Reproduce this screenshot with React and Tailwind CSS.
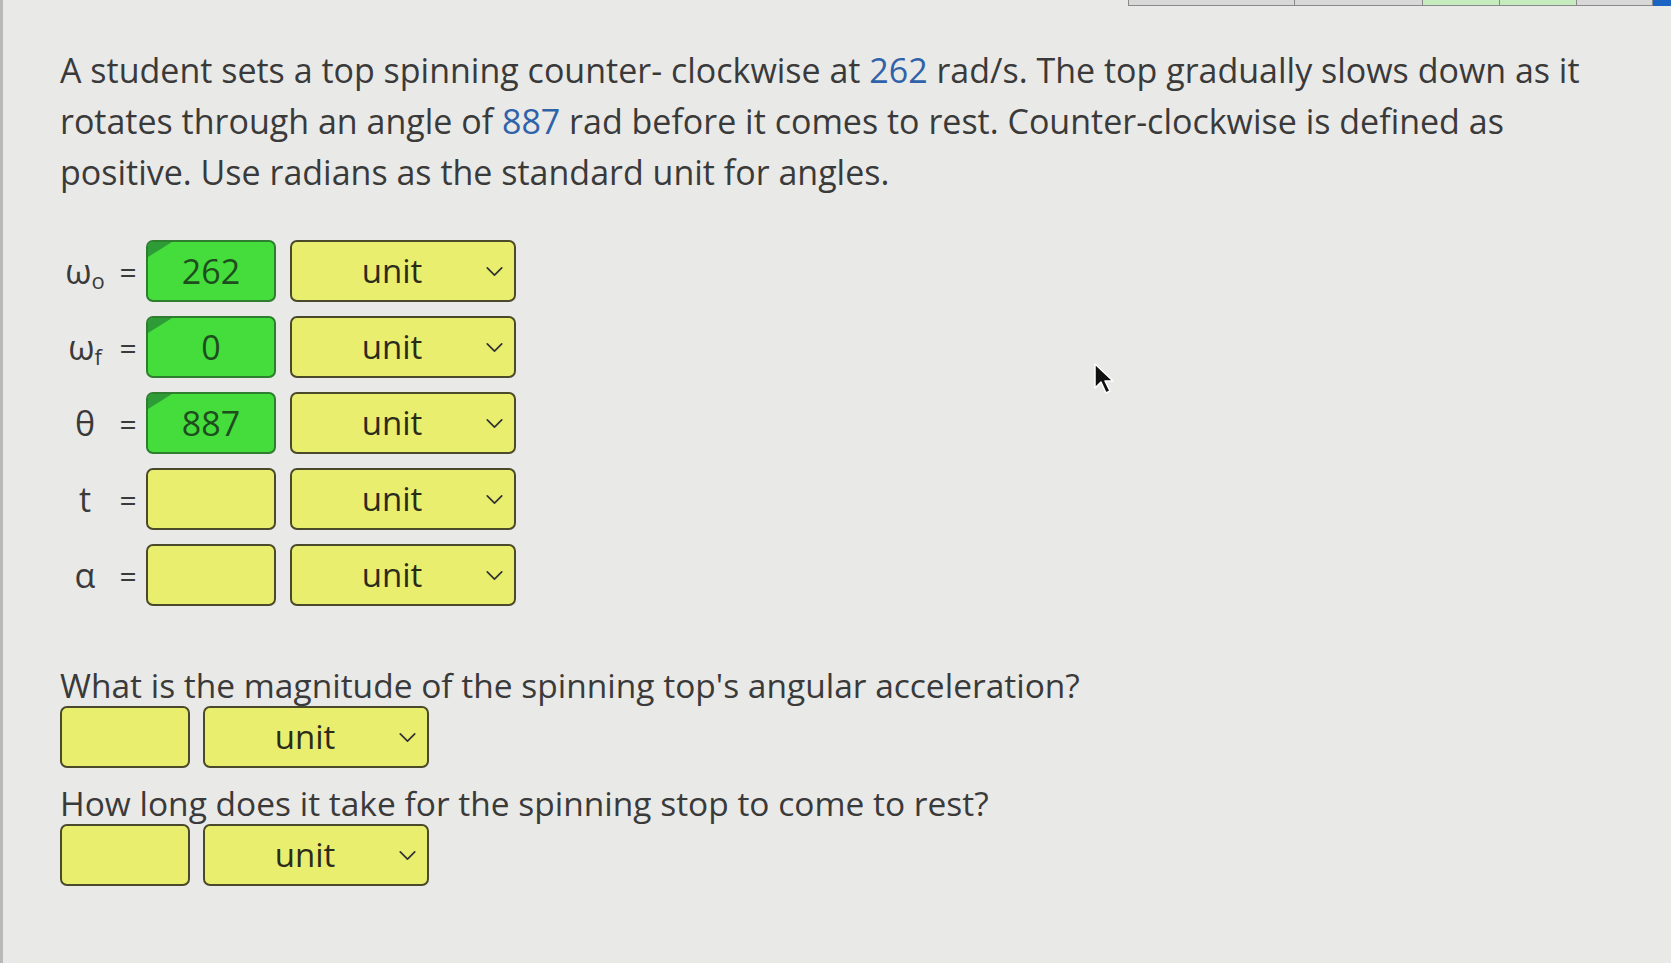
import { ChevronDown } from 'lucide-react'

const font = { fontFamily: '"Open Sans", "Noto Sans", sans-serif' }

const GreenBox = ({ value }) => (
  <div className="relative w-[130px] h-[62px] rounded-[7px] border-2 border-[#2f7d2f] bg-[#44dd3c] flex items-center justify-center text-[34px] text-[#1e4d1e] overflow-hidden">
    <div className="absolute top-0 left-0 w-[24px] h-[15px] bg-[#2e9c36] [clip-path:polygon(0_0,100%_0,0_100%)]" />
    {value}
  </div>
)

const YellowBox = ({ w = 'w-[130px]' }) => (
  <div className={`${w} h-[62px] rounded-[7px] border-2 border-[#4a4a2a] bg-[#eaee6e]`} />
)

const UnitSelect = ({ w = 'w-[226px]' }) => (
  <div className={`${w} h-[62px] rounded-[7px] border-2 border-[#4a4a2a] bg-[#eaee6e] flex items-center pl-3 pr-[5px]`}>
    <span className="flex-1 text-center text-[33px] text-[#2b2b1a]">unit</span>
    <ChevronDown size={29} strokeWidth={1.4} className="text-[#333]" />
  </div>
)

const Row = ({ label, children }) => (
  <div className="flex items-center h-[62px]">
    <div className="w-[50px] text-center text-[34px] text-[#3a3a3a]">{label}</div>
    <div className="w-[36px] text-[30px] text-[#3a3a3a] text-center">=</div>
    <div className="flex items-center gap-[14px]">{children}</div>
  </div>
)

export default function App() {
  return (
    <div className="relative w-[1671px] h-[963px] overflow-hidden bg-[#e9e9e8] border-l-[3px] border-[#b9b9b9]" style={font}>
      {/* top tabs */}
      <div className="absolute top-0 left-[1125px] right-0 h-[6px] flex">
        <div className="w-[167px] bg-[#d8d8d8] border border-t-0 border-[#8a8a8a]" />
        <div className="w-[128px] bg-[#d8d8d8] border border-t-0 border-l-0 border-[#8a8a8a]" />
        <div className="w-[77px] bg-[#c6ebbf] border border-t-0 border-l-0 border-[#8a8a8a]" />
        <div className="w-[77px] bg-[#c6ebbf] border border-t-0 border-l-0 border-[#8a8a8a]" />
        <div className="w-[76px] bg-[#d8d8d8] border border-t-0 border-l-0 border-[#8a8a8a]" />
        <div className="flex-1 bg-[#1b64c4]" />
      </div>

      <div className="pl-[57px] pt-[45px]">
        <p className="text-[34px] leading-[51px] text-[#3a3a3a] whitespace-nowrap">
          A student sets a top spinning counter- clockwise at <span className="text-[#2f62a8]">262</span> rad/s. The top gradually slows down as it
          <br />
          rotates through an angle of <span className="text-[#2f62a8]">887</span> rad before it comes to rest. Counter-clockwise is defined as
          <br />
          positive. Use radians as the standard unit for angles.
        </p>

        <div className="mt-[42px] flex flex-col gap-[14px]">
          <Row label={<span>ω<sub className="text-[22px]">o</sub></span>}>
            <GreenBox value="262" />
            <UnitSelect />
          </Row>
          <Row label={<span>ω<sub className="text-[22px]">f</sub></span>}>
            <GreenBox value="0" />
            <UnitSelect />
          </Row>
          <Row label="θ">
            <GreenBox value="887" />
            <UnitSelect />
          </Row>
          <Row label="t">
            <YellowBox />
            <UnitSelect />
          </Row>
          <Row label="α">
            <YellowBox />
            <UnitSelect />
          </Row>
        </div>

        <p className="mt-[56px] text-[33.5px] leading-[46px] text-[#3a3a3a] whitespace-nowrap">
          What is the magnitude of the spinning top's angular acceleration?
        </p>
        <div className="-mt-[2px] flex items-center gap-[13px]">
          <YellowBox />
          <UnitSelect />
        </div>
        <p className="mt-[12px] text-[33.5px] leading-[46px] text-[#3a3a3a] whitespace-nowrap">
          How long does it take for the spinning stop to come to rest?
        </p>
        <div className="-mt-[2px] flex items-center gap-[13px]">
          <YellowBox />
          <UnitSelect />
        </div>
      </div>

      {/* mouse cursor */}
      <svg className="absolute left-[1090px] top-[362px]" width="22" height="34" viewBox="0 0 22 34">
        <path d="M2 2 L2 26 L8 20 L13 31 L17 29 L12 19 L20 19 Z" fill="#111" stroke="#fff" strokeWidth="1.5" strokeLinejoin="round" />
      </svg>
    </div>
  )
}
